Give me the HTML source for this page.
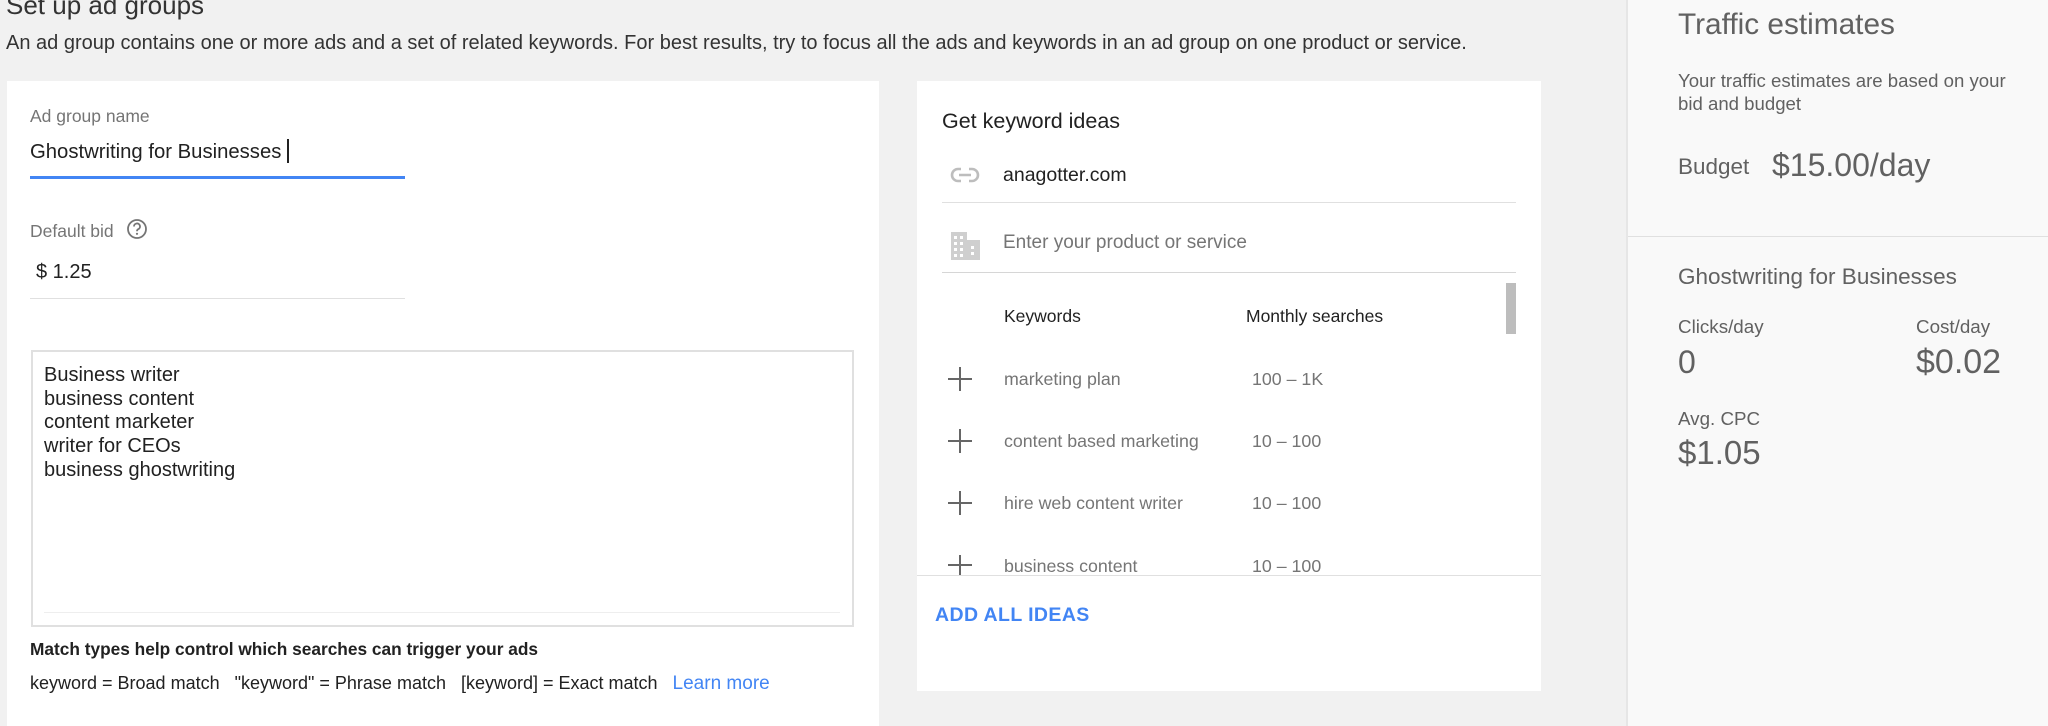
<!DOCTYPE html>
<html><head><meta charset="utf-8"><style>
*{margin:0;padding:0;box-sizing:border-box}
body{width:2048px;height:726px;overflow:hidden;background:#f1f1f1;font-family:"Liberation Sans",Arial,sans-serif;position:relative;color:#212121}
.a{position:absolute;white-space:nowrap}
.card{position:absolute;background:#fff}
.g{color:#757575}
.line{position:absolute;height:1px;background:#e0e0e0}
.rp{color:#616161}
.pl{position:absolute;width:24px;height:24px}
.pl:before{content:"";position:absolute;left:0;top:11px;width:24px;height:2.4px;background:#666}
.pl:after{content:"";position:absolute;left:11px;top:0;width:2.4px;height:24px;background:#666}
</style></head><body>
<div class="a" style="left:6px;top:-10px;font-size:26px;line-height:30px;color:#333">Set up ad groups</div>
<div class="a" style="left:6px;top:32px;font-size:20px;line-height:22px;color:#333">An ad group contains one or more ads and a set of related keywords. For best results, try to focus all the ads and keywords in an ad group on one product or service.</div>

<div class="card" style="left:7px;top:81px;width:872px;height:645px"></div>
<div class="a g" style="left:30px;top:106px;font-size:17.5px;line-height:20px">Ad group name</div>
<div class="a" style="left:30px;top:139px;font-size:20.3px;line-height:24px">Ghostwriting for Businesses <span style="display:inline-block;width:2px;height:24px;background:#222;vertical-align:-5px"></span></div>
<div class="a" style="left:30px;top:176px;width:375px;height:3px;background:#4285f4"></div>
<div class="a g" style="left:30px;top:221px;font-size:17.5px;line-height:20px">Default bid</div>
<svg class="a" style="left:126px;top:218px" width="22" height="22" viewBox="0 0 22 22"><circle cx="11" cy="11" r="9" fill="none" stroke="#757575" stroke-width="1.8"/><path d="M8 8.5a3 3 0 1 1 4.2 2.7c-.9.4-1.2 1-1.2 2" fill="none" stroke="#757575" stroke-width="1.8"/><circle cx="11" cy="15.8" r="1.1" fill="#757575"/></svg>
<div class="a" style="left:36px;top:260px;font-size:20px;line-height:24px">$ 1.25</div>
<div class="line" style="left:30px;top:298px;width:375px"></div>
<div class="a" style="left:31px;top:350px;width:823px;height:277px;border:2px solid #e0e0e0"></div>
<div class="a" style="left:44px;top:364px;font-size:20px;line-height:23.7px">Business writer<br>business content<br>content marketer<br>writer for CEOs<br>business ghostwriting</div>
<div class="line" style="left:44px;top:612px;width:796px;background:#eee"></div>
<div class="a" style="left:30px;top:639px;font-size:17.3px;line-height:20px;font-weight:bold">Match types help control which searches can trigger your ads</div>
<div class="a" style="left:30px;top:673px;font-size:18px;line-height:20px">keyword = Broad match&nbsp;&nbsp; "keyword" = Phrase match&nbsp;&nbsp; [keyword] = Exact match&nbsp;&nbsp; <span style="color:#4285f4;font-size:19px">Learn more</span></div>

<div class="card" style="left:917px;top:81px;width:624px;height:610px;overflow:hidden">
  <div class="a" style="left:25px;top:27px;font-size:21.5px;line-height:26px">Get keyword ideas</div>
  <svg class="a" style="left:33px;top:85px" width="30" height="18" viewBox="0 0 30 18"><path d="M11 3H8a6 6 0 0 0 0 12h3M19 3h3a6 6 0 0 1 0 12h-3M9 9h12" fill="none" stroke="#bdbdbd" stroke-width="2.6"/></svg>
  <div class="a" style="left:86px;top:82px;font-size:19.5px;line-height:24px">anagotter.com</div>
  <div class="line" style="left:25px;top:121px;width:574px"></div>
  <svg class="a" style="left:34px;top:151px" width="29" height="28" viewBox="0 0 29 28"><rect x="0" y="0" width="16" height="28" fill="#cfcfcf"/><rect x="16" y="8" width="13" height="20" fill="#cfcfcf"/><g fill="#fff"><rect x="3" y="4" width="3" height="3"/><rect x="9" y="4" width="3" height="3"/><rect x="3" y="10" width="3" height="3"/><rect x="9" y="10" width="3" height="3"/><rect x="3" y="16" width="3" height="3"/><rect x="9" y="16" width="3" height="3"/><rect x="3" y="22" width="3" height="3"/><rect x="9" y="22" width="3" height="3"/><rect x="20" y="14" width="3" height="3"/><rect x="20" y="20" width="3" height="3"/></g></svg>
  <div class="a g" style="left:86px;top:150px;font-size:19px;line-height:24px">Enter your product or service</div>
  <div class="line" style="left:25px;top:191px;width:574px;background:#d6d6d6"></div>
  <div class="a" style="left:589px;top:202px;width:10px;height:51px;background:#bdbdbd"></div>
  <div class="a" style="left:87px;top:225px;font-size:17.5px;line-height:20px">Keywords</div>
  <div class="a" style="left:329px;top:225px;font-size:17.5px;line-height:20px">Monthly searches</div>
  <div class="pl" style="left:31px;top:286px"></div>
  <div class="a g" style="left:87px;top:287px;font-size:17.8px;line-height:22px">marketing plan</div>
  <div class="a g" style="left:335px;top:287px;font-size:17.8px;line-height:22px">100 – 1K</div>
  <div class="pl" style="left:31px;top:348px"></div>
  <div class="a g" style="left:87px;top:349px;font-size:17.8px;line-height:22px">content based marketing</div>
  <div class="a g" style="left:335px;top:349px;font-size:17.8px;line-height:22px">10 – 100</div>
  <div class="pl" style="left:31px;top:410px"></div>
  <div class="a g" style="left:87px;top:411px;font-size:17.8px;line-height:22px">hire web content writer</div>
  <div class="a g" style="left:335px;top:411px;font-size:17.8px;line-height:22px">10 – 100</div>
  <div class="a" style="left:0;top:474px;width:624px;height:20px;overflow:hidden">
    <div class="pl" style="left:31px;top:-2px"></div>
    <div class="a g" style="left:87px;top:0;font-size:17.8px;line-height:22px">business content</div>
    <div class="a g" style="left:335px;top:0;font-size:17.8px;line-height:22px">10 – 100</div>
  </div>
  <div class="line" style="left:0;top:494px;width:624px"></div>
  <div class="a" style="left:18px;top:522px;font-size:19.5px;line-height:24px;color:#4285f4;font-weight:bold;letter-spacing:.4px">ADD ALL IDEAS</div>
</div>

<div class="a" style="left:1626px;top:0;width:422px;height:726px;background:#f9f9f9;border-left:2px solid #e6e6e6"></div>
<div class="line" style="left:1628px;top:236px;width:420px;background:#e0e0e0"></div>
<div class="a rp" style="left:1678px;top:8px;font-size:29.8px;line-height:34px">Traffic estimates</div>
<div class="a rp" style="left:1678px;top:69px;font-size:18.6px;line-height:23px">Your traffic estimates are based on your<br>bid and budget</div>
<div class="a rp" style="left:1678px;top:154px;font-size:22.5px;line-height:26px">Budget</div>
<div class="a rp" style="left:1772px;top:147px;font-size:32px;line-height:36px">$15.00/day</div>
<div class="a rp" style="left:1678px;top:264px;font-size:22.5px;line-height:26px">Ghostwriting for Businesses</div>
<div class="a rp" style="left:1678px;top:316px;font-size:18.8px;line-height:22px">Clicks/day</div>
<div class="a rp" style="left:1678px;top:343px;font-size:32px;line-height:38px">0</div>
<div class="a rp" style="left:1916px;top:316px;font-size:18.8px;line-height:22px">Cost/day</div>
<div class="a rp" style="left:1916px;top:343px;font-size:34px;line-height:38px">$0.02</div>
<div class="a rp" style="left:1678px;top:408px;font-size:18.8px;line-height:22px">Avg. CPC</div>
<div class="a rp" style="left:1678px;top:434px;font-size:33px;line-height:38px">$1.05</div>
</body></html>
